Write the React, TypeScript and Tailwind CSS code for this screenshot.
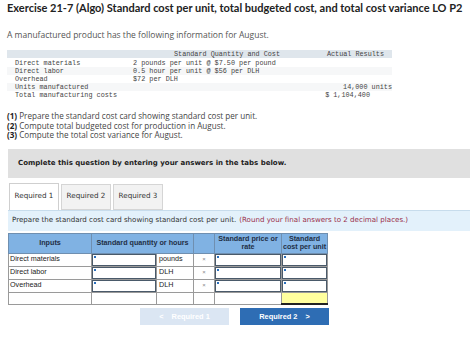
import React from "react";

const dataRows = [
  { label: "Direct materials", std: "2 pounds per unit @ $7.50 per pound", actual: "" },
  { label: "Direct labor", std: "0.5 hour per unit @ $56 per DLH", actual: "" },
  { label: "Overhead", std: "$72 per DLH", actual: "" },
  { label: "Units manufactured", std: "", actual: "14,000 units" },
  { label: "Total manufacturing costs", std: "", actual: "$ 1,104,400" },
];

const inputRows = [
  { label: "Direct materials", unit: "pounds" },
  { label: "Direct labor", unit: "DLH" },
  { label: "Overhead", unit: "DLH" },
];

function Cell({ className = "", children }: { className?: string; children?: React.ReactNode }) {
  return <td className={`border border-[#9a9a9a] p-0 ${className}`}>{children}</td>;
}

function InputBox() {
  return (
    <div className="relative h-full w-full border border-[#4a5a6a] bg-white">
      <span className="absolute left-[1px] top-[1px] h-[2px] w-[2px] bg-[#2a6ebb]" />
    </div>
  );
}

export default function App() {
  return (
    <div className="w-[474px] h-[350px] bg-white overflow-hidden font-['Lato',sans-serif] text-[#333]">
      <div className="px-[7px] pt-[1px]">
        <h1 className="text-[11px] font-bold text-[#222] leading-[14px] whitespace-nowrap">
          Exercise 21-7 (Algo) Standard cost per unit, total budgeted cost, and total cost variance LO P2
        </h1>
        <p className="mt-[14px] font-['Open_Sans',sans-serif] text-[8.5px] text-[#555] leading-[11px] whitespace-nowrap">
          A manufactured product has the following information for August.
        </p>

        {/* given data */}
        <div className="mt-[10px] w-[385px] font-['Liberation_Mono',monospace] text-[6.8px] leading-[8px] text-[#444]">
          <div className="flex bg-[#dfe6ec] h-[8px] mb-[1px]">
            <div className="w-[126px]" />
            <div className="w-[188px] text-center">Standard Quantity and Cost</div>
            <div className="flex-1 text-right pr-[8px]">Actual Results</div>
          </div>
          {dataRows.map((r, i) => (
            <div key={r.label} className={`flex h-[8px] ${i % 2 === 1 ? "bg-[#f6f7f8]" : ""}`}>
              <div className="w-[126px] pl-[8px] whitespace-nowrap">{r.label}</div>
              <div className="w-[188px] whitespace-nowrap">{r.std}</div>
              <div className="flex-1 text-right whitespace-nowrap">
                {r.label === "Total manufacturing costs" ? <span className="mr-[22px]">{r.actual}</span> : r.actual}
              </div>
            </div>
          ))}
        </div>

        <div className="mt-[12px] font-['Open_Sans',sans-serif] text-[8.1px] leading-[9.6px] text-[#444] whitespace-nowrap">
          <div><b className="text-[#222]">(1)</b> Prepare the standard cost card showing standard cost per unit.</div>
          <div><b className="text-[#222]">(2)</b> Compute total budgeted cost for production in August.</div>
          <div><b className="text-[#222]">(3)</b> Compute the total cost variance for August.</div>
        </div>
      </div>

      <div className="ml-[8px] w-[462px] mt-[9px] h-[29px] bg-[#e0e0e0] flex items-center pl-[10px] font-['DejaVu_Sans',sans-serif] text-[7px] font-bold text-[#222] whitespace-nowrap">
        Complete this question by entering your answers in the tabs below.
      </div>

      {/* tabs */}
      <div className="ml-[8px] w-[462px] mt-[5px] flex items-end gap-[2px] pl-[1px] font-['DejaVu_Sans',sans-serif] text-[7.2px] text-[#333]">
        <div className="h-[27px] w-[50px] flex items-center justify-center border border-[#cfcfcf] border-b-0 bg-white">Required 1</div>
        <div className="h-[26px] w-[50px] flex items-center justify-center border border-[#d5d5d5] bg-[#f2f2f2]">Required 2</div>
        <div className="h-[26px] w-[50px] flex items-center justify-center border border-[#d5d5d5] bg-[#f2f2f2]">Required 3</div>
      </div>
      <div className="ml-[8px] w-[462px] h-[21px] bg-[#e3f1fb] border-t border-[#c7dcec] flex items-center pl-[4px] font-['DejaVu_Sans',sans-serif] text-[7.1px] text-[#333] whitespace-nowrap">
        Prepare the standard cost card showing standard cost per unit.
        <span className="ml-[3px] text-[#9a2f4a]">(Round your final answers to 2 decimal places.)</span>
      </div>

      {/* answer table */}
      <table className="ml-[8px] mt-[2px] border-collapse font-['Liberation_Sans',sans-serif] text-[7.2px] text-[#222] table-fixed">
        <colgroup>
          <col className="w-[83px]" />
          <col className="w-[65px]" />
          <col className="w-[37px]" />
          <col className="w-[21px]" />
          <col className="w-[67px]" />
          <col className="w-[46px]" />
        </colgroup>
        <thead>
          <tr className="h-[20px] bg-[#80b2e3] font-bold text-[#1f2f45] text-center leading-[8px]">
            <th className="border border-[#6f8fb0]">Inputs</th>
            <th className="border border-[#6f8fb0]" colSpan={2}>Standard quantity or hours</th>
            <th className="border border-[#6f8fb0]" />
            <th className="border border-[#6f8fb0]">Standard price or<br />rate</th>
            <th className="border border-[#6f8fb0]">Standard<br />cost per unit</th>
          </tr>
        </thead>
        <tbody>
          {inputRows.map((r) => (
            <tr key={r.label} className="h-[13px]">
              <Cell className="pl-[1px]">{r.label}</Cell>
              <Cell className="h-[13px]"><InputBox /></Cell>
              <Cell className="pl-[2px]">{r.unit}</Cell>
              <Cell className="text-center text-[#888] text-[6px]">×</Cell>
              <Cell className="h-[13px]"><InputBox /></Cell>
              <Cell className="h-[13px]"><InputBox /></Cell>
            </tr>
          ))}
          <tr className="h-[12px]">
            <Cell />
            <Cell />
            <Cell />
            <Cell />
            <Cell />
            <Cell className="bg-[#ffff9e] border-b-2 border-b-[#222]" />
          </tr>
        </tbody>
      </table>

      {/* nav buttons */}
      <div className="mt-[3px] flex gap-[11px] pl-[140px] font-['Liberation_Sans',sans-serif] text-[7.4px] font-bold">
        <div className="h-[17px] w-[89px] bg-[#dbe6f3] text-white flex items-center justify-center gap-[8px]">
          <span>&lt;</span>
          <span>Required 1</span>
        </div>
        <div className="h-[17px] w-[89px] bg-[#2e6db4] text-white flex items-center justify-center gap-[8px]">
          <span>Required 2</span>
          <span>&gt;</span>
        </div>
      </div>
    </div>
  );
}
